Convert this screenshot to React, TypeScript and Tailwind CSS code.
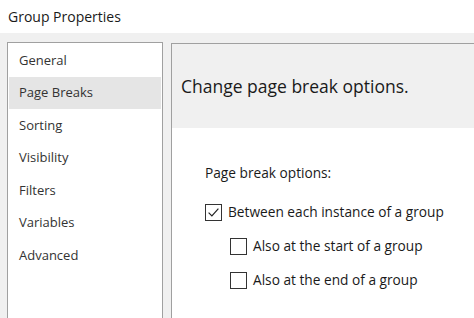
import React from "react"

const items = ["General", "Page Breaks", "Sorting", "Visibility", "Filters", "Variables", "Advanced"]

function CheckBox({ checked }: { checked?: boolean }) {
  return (
    <span className="w-[17px] h-[17px] border border-[#333333] bg-white flex items-center justify-center shrink-0">
      {checked && (
        <svg width="15" height="15" viewBox="0 0 15 15" fill="none">
          <path d="M2.6 7.6 L5.9 10.9 L12.4 3.6" stroke="#222222" strokeWidth="1.2" />
        </svg>
      )}
    </span>
  )
}

export default function App() {
  return (
    <div
      className="w-[474px] h-[318px] overflow-hidden bg-[#f0f0f0] flex flex-col text-[#1a1a1a]"
      style={{ fontFamily: '"Segoe UI", "Open Sans", "Noto Sans", sans-serif' }}
    >
      <div className="h-[33px] bg-white flex items-center pl-[8px] text-[14px]">Group Properties</div>

      <div className="flex flex-1 pl-[7px] pt-[9px]">
        {/* left nav */}
        <div className="w-[156px] bg-white border border-b-0 border-[#a0a0a0] px-[1px] pt-[1px]">
          {items.map((it) => (
            <div
              key={it}
              className={`h-[32.5px] flex items-center pl-[10px] text-[13px] text-[#333333] ${
                it === "Page Breaks" ? "bg-[#e5e5e5]" : ""
              }`}
            >
              {it}
            </div>
          ))}
        </div>

        {/* right panel */}
        <div className="flex-1 ml-[8px] mt-[1px] border-l border-t border-[#a0a0a0] bg-white flex flex-col">
          <div className="h-[84px] bg-[#f0f0f0] flex items-center pl-[9px] text-[17.5px] text-[#1a1a1a]">
            Change page break options.
          </div>
          <div className="pl-[33px] pt-[35px] text-[13.7px] text-[#1a1a1a]">
            <div className="h-[20px] flex items-center">Page break options:</div>
            <div className="mt-[12px] h-[34px] flex items-center gap-[6px]">
              <CheckBox checked />
              <span>Between each instance of a group</span>
            </div>
            <div className="pl-[25px] h-[34px] flex items-center gap-[6px]">
              <CheckBox />
              <span>Also at the start of a group</span>
            </div>
            <div className="pl-[25px] h-[34px] flex items-center gap-[6px]">
              <CheckBox />
              <span>Also at the end of a group</span>
            </div>
          </div>
        </div>
      </div>
    </div>
  )
}
